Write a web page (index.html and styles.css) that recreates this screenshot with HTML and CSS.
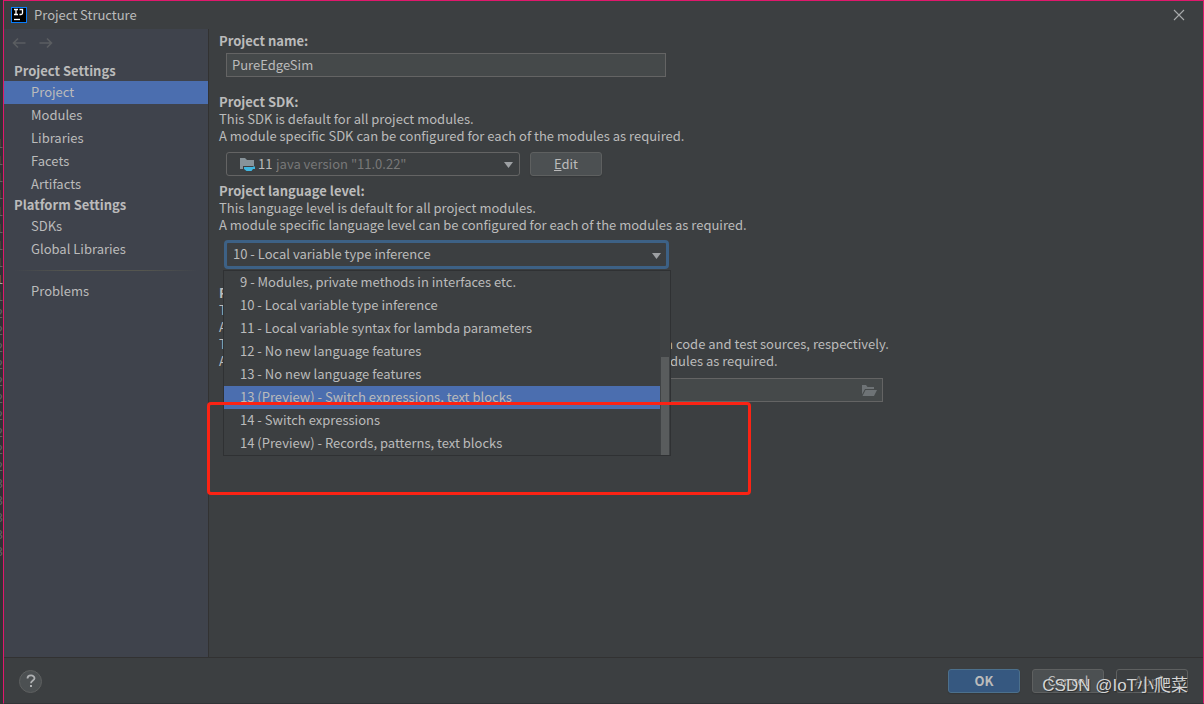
FILE: index.html
```html
<!DOCTYPE html>
<html lang="en">
<head>
<meta charset="utf-8">
<title>Project Structure</title>
<link rel="stylesheet" href="styles.css">
</head>
<body>
<div class="desktop">
  <div class="gutter" aria-hidden="true">
    <span>1</span><span>1</span><span>1</span><span>1</span><span>1</span><span>1</span><span>1</span><span>1</span><span class="current">1</span><span>1</span>
    <span>2</span><span>2</span><span>2</span><span>2</span><span>2</span><span>2</span><span>2</span><span>2</span><span>2</span><span>2</span>
    <span>3</span><span>3</span><span>3</span><span>3</span><span>3</span>
  </div>
  <div class="dialog" role="dialog" aria-labelledby="dialog-title">
    <header class="titlebar">
      <svg class="app-icon" viewBox="0 0 16 16" width="16" height="16" aria-hidden="true">
        <rect width="16" height="16" fill="#087cfa"/>
        <rect x="1" y="1" width="14" height="14" fill="#000"/>
        <path d="M3 2.500h4M5 2.500v5M3 7.500h4M8.500 2.500h3v3.500q0 1.500-1.500 1.500h-1.500" fill="none" stroke="#fff" stroke-width="1.300"/>
        <path d="M3 12.500h6" stroke="#fff" stroke-width="1.300"/>
      </svg>
      <h1 class="title" id="dialog-title">Project Structure</h1>
      <button class="close" type="button" aria-label="Close">
        <svg viewBox="0 0 12 12" width="12" height="12"><path d="M1 1l10 10M11 1L1 11" stroke="#a9abac" stroke-width="1.100"/></svg>
      </button>
    </header>
    <div class="body">
      <nav class="sidebar">
        <div class="history">
          <button type="button" aria-label="Back"><svg viewBox="0 0 14 12" width="14" height="12"><path d="M13.500 6H1.500M6 1.500L1.500 6L6 10.500" fill="none" stroke="#5b5e61" stroke-width="1.600"/></svg></button>
          <button type="button" aria-label="Forward"><svg viewBox="0 0 14 12" width="14" height="12"><path d="M.5 6h12M8 1.500L12.500 6L8 10.500" fill="none" stroke="#5b5e61" stroke-width="1.600"/></svg></button>
        </div>
        <h2 class="group">Project Settings</h2>
        <a class="item selected" href="#project">Project</a>
        <a class="item" href="#modules">Modules</a>
        <a class="item" href="#libraries">Libraries</a>
        <a class="item" href="#facets">Facets</a>
        <a class="item" href="#artifacts">Artifacts</a>
        <h2 class="group">Platform Settings</h2>
        <a class="item" href="#sdks">SDKs</a>
        <a class="item" href="#global">Global Libraries</a>
        <hr class="rule">
        <a class="item" href="#problems">Problems</a>
      </nav>
      <main class="content">
        <section class="field name-field">
          <label class="label" for="name">Project name:</label>
          <div class="control"><input class="text name-input" id="name" type="text" value="PureEdgeSim"></div>
        </section>
        <section class="field sdk-field">
          <label class="label" for="sdk">Project SDK:</label>
          <p>This SDK is default for all project modules.</p>
          <p>A module specific SDK can be configured for each of the modules as required.</p>
          <div class="control">
            <div class="combo sdk-combo">
              <select id="sdk"><option>java version "11.0.22"</option></select>
              <span class="sdk-value">
                <svg viewBox="0 0 16 16" width="16" height="16" aria-hidden="true"><path d="M1 2h5l2 2h7v6H4v3H1z" fill="#87939a"/><path d="M5 11h9v-.5h2v2.500h-2l-1.500 2H7.500L5 13z" fill="#40b6e0"/></svg>
                <span class="sdk-name">11</span>
              </span>
              <svg class="arrow" viewBox="0 0 10 6" width="10" height="6" aria-hidden="true"><path d="M1 0h9L5.500 6z" fill="#9da0a3"/></svg>
            </div>
            <button class="button" type="button"><u>E</u>dit</button>
          </div>
        </section>
        <section class="field level-field">
          <label class="label" for="level">Project language level:</label>
          <p>This language level is default for all project modules.</p>
          <p>A module specific language level can be configured for each of the modules as required.</p>
          <div class="combo level-combo">
            <select id="level"><option>10 - Local variable type inference</option></select>
            <svg class="arrow" viewBox="0 0 10 6" width="10" height="6" aria-hidden="true"><path d="M0 0h9L4.500 6z" fill="#9da0a3"/></svg>
            <div class="popup">
              <ul class="options" role="listbox" aria-label="Project language level">
                <li role="option">9 - Modules, private methods in interfaces etc.</li>
                <li role="option">10 - Local variable type inference</li>
                <li role="option">11 - Local variable syntax for lambda parameters</li>
                <li role="option">12 - No new language features</li>
                <li role="option">13 - No new language features</li>
                <li role="option" class="selected" aria-selected="true">13 (Preview) - Switch expressions, text blocks</li>
                <li role="option">14 - Switch expressions</li>
                <li role="option">14 (Preview) - Records, patterns, text blocks</li>
              </ul>
              <div class="track"><div class="thumb"></div></div>
            </div>
          </div>
        </section>
        <section class="field output-field">
          <label class="label" for="output">Project compiler output:</label>
          <p>This path is used to store all project compilation results.</p>
          <p>A directory corresponding to each module is created under this path.</p>
          <p>This directory holds two subdirectories: Production and Test for production code and test sources, respectively.</p>
          <p>A module specific compiler output path can be specified for each of the modules as required.</p>
          <div class="control">
            <div class="path">
              <input class="text" id="output" type="text">
              <button class="browse" type="button" aria-label="Browse"><svg viewBox="0 0 16 12" width="16" height="12"><path d="M1 0h4l1.500 2H13v2H4L1 9.500z" fill="#6e7376"/><path d="M4.500 5H16l-3 6H1.500z" fill="#6e7376"/></svg></button>
            </div>
          </div>
        </section>
      </main>
    </div>
    <footer class="footer">
      <button class="help" type="button" aria-label="Help"><svg viewBox="0 0 10 14" width="10" height="14"><path d="M1.500 4.500C1.500 0.500 8.500 0.500 8.500 4.300C8.500 6.600 5 6.600 5 9.300" fill="none" stroke="#afb1b3" stroke-width="1.800"/><rect x="4" y="11" width="2" height="2" fill="#afb1b3"/></svg></button>
      <div class="actions">
        <button class="button primary" type="button">OK</button>
        <button class="button" type="button">Cancel</button>
        <button class="button disabled" type="button" disabled>Apply</button>
      </div>
    </footer>
  </div>
  <div class="highlight"></div>
  <div class="watermark" lang="zh">CSDN @IoT小爬菜</div>
</div>
</body>
</html>
```
FILE: styles.css
```css
* { box-sizing: border-box; }
body {
  margin: 0;
  background: #313335;
  color: #bbbbbb;
  font: 13px/17px "Noto Sans CJK SC", "Noto Sans", sans-serif;
}
h1, h2, p, ul { margin: 0; padding: 0; font-size: inherit; }
button, input, select { font: inherit; color: inherit; margin: 0; }
svg { display: block; flex: none; }
.desktop { position: relative; display: flex; height: 100vh; overflow: hidden; }

.gutter {
  flex: none;
  width: 3px;
  padding-top: 136px;
  overflow: hidden;
  display: flex;
  flex-direction: column;
  align-items: flex-end;
  color: #606366;
  font-family: "Liberation Mono", monospace;
}
.gutter span { flex: none; height: 17px; }
.gutter .current { color: #a4a3a3; }

.dialog {
  flex: 1;
  min-width: 0;
  display: flex;
  flex-direction: column;
  background: #3c3f41;
  border: 1px solid #e0186c;
  border-bottom: 1px solid #323437;
}
.titlebar { display: flex; align-items: center; gap: 7px; height: 28px; padding: 0 18px 0 7px; }
.title { flex: 1; padding-bottom: 2px; font-weight: 400; }
.close { display: flex; padding: 0; border: 0; background: none; }

.body { flex: 1; min-height: 0; display: flex; }
.sidebar { flex: none; width: 205px; background: #3f434c; border-right: 1px solid #323232; }
.history { display: flex; gap: 13px; height: 33px; padding: 8px 8px 0; }
.history button { height: 12px; padding: 0; border: 0; background: none; }
.group { height: 19px; padding: 0 10px; font-weight: 700; }
.item { display: block; height: 23px; padding: 2px 27px; color: inherit; text-decoration: none; }
.item.selected { background: #4b6eaf; }
.rule { height: 1px; margin: 9px 10px; border: 0; background: linear-gradient(90deg, transparent, #55564f 30%, #55564f 70%, transparent); }

.content { flex: 1; min-width: 0; padding: 3px 10px; }
.field { white-space: nowrap; }
.label { display: block; font-weight: 700; }
.control { display: flex; gap: 10px; padding-left: 7px; }
.text { width: 100%; height: 24px; padding: 0 5px 2px; border: 1px solid #646464; background: #45494a; outline: 0; }
.name-field .control { padding-top: 4px; }
.name-input { max-width: 440px; }
.sdk-field { margin-top: 16px; }
.sdk-field .control { padding-top: 8px; }
.level-field { margin-top: 6px; }
.output-field { margin-top: 15px; }
.output-field .control { padding-top: 9px; }

.combo { position: relative; }
.combo select { width: 100%; height: 100%; border: 1px solid #646464; border-radius: 3px; background: none; appearance: none; outline: 0; }
.arrow { position: absolute; right: 7px; top: 50%; margin-top: -2px; pointer-events: none; }
.sdk-combo { flex: 0 1 294px; height: 24px; }
.sdk-combo select { padding: 0 20px 2px 49px; color: #787878; }
.sdk-value { position: absolute; left: 13px; top: 0; height: 24px; display: flex; align-items: center; gap: 3px; pointer-events: none; }
.sdk-name { padding-bottom: 2px; }
.level-combo { width: 445px; height: 29px; margin: 7px 0 0 5px; }
.level-combo select { padding: 0 6px 2px; border: 3px solid #3d6185; border-radius: 4px; }

.popup {
  position: absolute;
  z-index: 1;
  top: 30px;
  left: -1px;
  width: 448px;
  display: flex;
  background: #3c3f41;
  border: 1px solid #2f3133;
}
.options { flex: 1; list-style: none; }
.options li { height: 23px; padding: 2px 16px; }
.options .selected { background: #4b6eaf; }
.track { width: 10px; display: flex; align-items: flex-end; background: #3f4244; }
.thumb { width: 8px; height: 53%; margin-left: 1px; background: #595c5d; }

.path { flex: 0 1 657px; display: flex; align-items: center; border: 1px solid #646464; background: #45494a; }
.path .text { flex: 1; height: 22px; border: 0; background: none; }
.browse { padding: 2px 5px 0; border: 0; background: none; }

.button {
  width: 72px;
  height: 24px;
  padding: 0 0 2px;
  border: 1px solid #5e6060;
  border-radius: 3px;
  background: #4c5052;
  box-shadow: 0 1px 1px #35383a;
}
.primary { background: #365880; border-color: #4c708c; font-weight: 700; }
.disabled { background: none; color: #777777; box-shadow: none; }
.footer {
  flex: none;
  display: flex;
  align-items: center;
  justify-content: space-between;
  height: 46px;
  padding: 1px 15px 0;
  border-top: 1px solid #323232;
}
.help { display: flex; align-items: center; justify-content: center; width: 23px; height: 23px; padding: 0; border: 1px solid #5e6060; border-radius: 50%; background: #4c5052; }
.actions { display: flex; gap: 12px; }

.highlight { position: absolute; left: 207px; top: 402px; width: 544px; height: 93px; border: 3px solid #fb2314; border-radius: 4px; z-index: 2; }
.watermark {
  position: absolute;
  z-index: 2;
  right: 16px;
  bottom: 6px;
  color: #d4d5d5;
  font: 17px/24px "Liberation Sans", "Noto Sans CJK SC", sans-serif;
  text-shadow: 1px 1px 1px #2a2c2d;
}
```
